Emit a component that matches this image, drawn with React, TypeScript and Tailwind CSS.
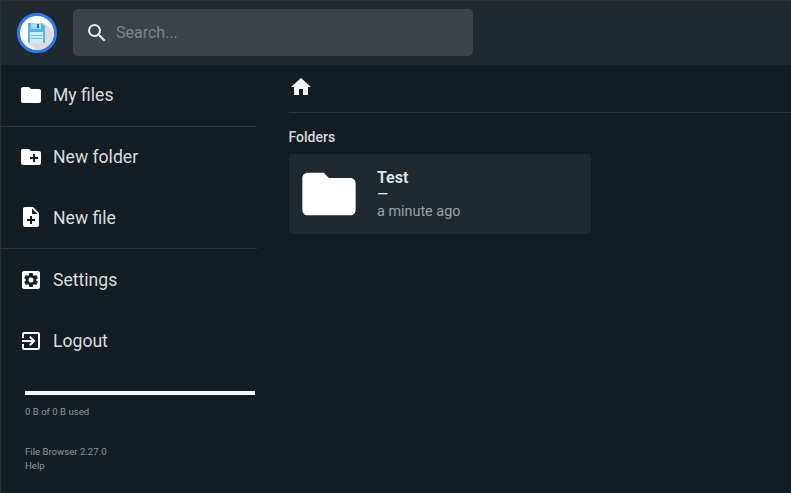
import type { ReactNode } from 'react';

const font = { fontFamily: 'Roboto, sans-serif' };

// material icons, filled
function Icon({ d, className }: { d: string; className?: string }) {
  return (
    <svg viewBox="0 0 24 24" fill="currentColor" className={className}>
      <path d={d} />
    </svg>
  );
}

const icons = {
  folder: 'M10 4H4c-1.1 0-2 .9-2 2v12c0 1.1.9 2 2 2h16c1.1 0 2-.9 2-2V8c0-1.1-.9-2-2-2h-8l-2-2z',
  newFolder:
    'M20 6h-8l-2-2H4c-1.11 0-2 .89-2 2v12c0 1.11.89 2 2 2h16c1.11 0 2-.89 2-2V8c0-1.11-.89-2-2-2zm-1 8h-3v3h-2v-3h-3v-2h3V9h2v3h3v2z',
  newFile:
    'M14 2H6c-1.1 0-2 .9-2 2v16c0 1.1.89 2 1.99 2H18c1.1 0 2-.9 2-2V8l-6-6zm2 14h-3v3h-2v-3H8v-2h3v-3h2v3h3v2zm-3-7V3.5L18.5 9H13z',
  settings:
    'M19 3H5c-1.11 0-2 .9-2 2v14c0 1.1.89 2 2 2h14c1.11 0 2-.9 2-2V5c0-1.1-.89-2-2-2zm-1.75 9c0 .23-.02.46-.05.68l1.48 1.16c.13.11.17.3.08.45l-1.4 2.42c-.09.15-.27.21-.43.15l-1.74-.7c-.36.28-.76.51-1.18.69l-.26 1.85c-.03.17-.18.3-.35.3h-2.8c-.17 0-.32-.13-.35-.29l-.26-1.85c-.43-.18-.82-.41-1.18-.69l-1.74.7c-.16.06-.34 0-.43-.15l-1.4-2.42c-.09-.15-.05-.34.08-.45l1.48-1.16c-.03-.23-.05-.46-.05-.69 0-.23.02-.46.05-.68l-1.48-1.16c-.13-.11-.17-.3-.08-.45l1.4-2.42c.09-.15.27-.21.43-.15l1.74.7c.36-.28.76-.51 1.18-.69l.26-1.85c.03-.17.18-.3.35-.3h2.8c.17 0 .32.13.35.29l.26 1.85c.43.18.82.41 1.18.69l1.74-.7c.16-.06.34 0 .43.15l1.4 2.42c.09.15.05.34-.08.45l-1.48 1.16c.03.23.05.46.05.69zM12 9.5a2.5 2.5 0 1 0 0 5 2.5 2.5 0 0 0 0-5z',
  logout:
    'M10.09 15.59L11.5 17l5-5-5-5-1.41 1.41L12.67 11H3v2h9.67l-2.58 2.59zM19 3H5c-1.11 0-2 .9-2 2v4h2V5h14v14H5v-4H3v4c0 1.1.89 2 2 2h14c1.1 0 2-.9 2-2V5c0-1.1-.9-2-2-2z',
  home: 'M10 20v-6h4v6h5v-8h3L12 3 2 12h3v8z',
  search:
    'M15.5 14h-.79l-.28-.27A6.47 6.47 0 0 0 16 9.5 6.5 6.5 0 1 0 9.5 16c1.61 0 3.09-.59 4.23-1.57l.27.28v.79l5 4.99L20.49 19l-4.99-5zm-6 0C7.01 14 5 11.99 5 9.5S7.01 5 9.5 5 14 7.01 14 9.5 11.99 14 9.5 14z',
};

function NavItem({ icon, className, children }: { icon: string; className: string; children: ReactNode }) {
  return (
    <div className={`flex items-center pl-[18px] text-[#dadcdf] ${className}`}>
      <Icon d={icon} className="mr-2.5 mb-px h-6 w-6 text-white" />
      <span className="text-[17.6px]">{children}</span>
    </div>
  );
}

function Logo() {
  return (
    <div className="h-10 w-10 overflow-hidden rounded-full border-[3px] border-[#2979ff] bg-white">
      <svg viewBox="0 0 34 34" className="h-[34px] w-[34px]">
        {/* 그림자 */}
        <path d="M25 7L38 20V38H20L8 27z" fill="#dcdcdc" />
        {/* 디스켓 */}
        <path d="M8 7h14l3 3v17H8z" fill="#4fb6ee" />
        <rect x="11" y="7" width="10" height="6" fill="#a9dcf7" />
        <rect x="17" y="8" width="2" height="4" fill="#37688a" />
        <rect x="10" y="16" width="13" height="11" fill="#cfeafa" />
        <path d="M11 19.5h11M11 22.5h11" stroke="#6fbfea" strokeWidth="1" />
      </svg>
    </div>
  );
}

export default function App() {
  return (
    <div className="flex h-[493px] w-[791px] flex-col overflow-hidden border-t border-l border-[#2f2f2f] bg-[#141d24]" style={font}>
      {/* 상단 헤더 */}
      <header className="flex h-16 shrink-0 items-center bg-[#20292f] pl-4">
        <Logo />
        <div className="mb-px ml-4 flex h-[47px] w-[400px] items-center rounded-[5px] bg-[#3c4349] pl-3">
          <Icon d={icons.search} className="h-6 w-6 text-[#e8eaed]" />
          <span className="ml-[7px] text-base text-[#7f8488]">Search...</span>
        </div>
      </header>

      <div className="flex flex-1">
        {/* 사이드바 */}
        <aside className="w-[256px] shrink-0">
          <NavItem icon={icons.folder} className="h-[61px]">My files</NavItem>
          <div className="border-t border-[#2e363c]" />
          <NavItem icon={icons.newFolder} className="h-[60.5px]">New folder</NavItem>
          <NavItem icon={icons.newFile} className="h-[60.5px]">New file</NavItem>
          <div className="border-t border-[#2e363c]" />
          <NavItem icon={icons.settings} className="mt-px h-[61px]">Settings</NavItem>
          <NavItem icon={icons.logout} className="h-[61px]">Logout</NavItem>

          <div className="mt-[19px] ml-6 w-[230px] text-[9.6px] text-[#8f9599]">
            <div className="h-1 bg-[#f5f6f7]" />
            <div className="mt-[10px]">0 B of 0 B used</div>
            <div className="mt-[26px] leading-[14px]">
              File Browser 2.27.0
              <br />
              Help
            </div>
          </div>
        </aside>

        {/* 본문 */}
        <main className="flex-1 pl-8">
          <div className="flex h-12 items-center border-b border-[#2e363c] pb-1">
            <Icon d={icons.home} className="h-6 w-6 text-[#f1f2f3]" />
          </div>
          <h2 className="mt-[14px] -ml-[0.5px] text-sm font-medium text-[#d6d8db]">Folders</h2>
          <div className="mt-[7px] flex h-20 w-[302px] items-center rounded-[3px] bg-[#20292f]">
            <Icon d={icons.folder} className="ml-2 h-16 w-16 text-white" />
            <div className="ml-4 pt-[2px] text-[#e1e4e8]">
              <div className="text-base leading-5 font-semibold">Test</div>
              <div className="text-[14.4px] leading-[14px]">—</div>
              <div className="text-[14.4px] leading-5 text-[#9aa0a4]">a minute ago</div>
            </div>
          </div>
        </main>
      </div>
    </div>
  );
}
